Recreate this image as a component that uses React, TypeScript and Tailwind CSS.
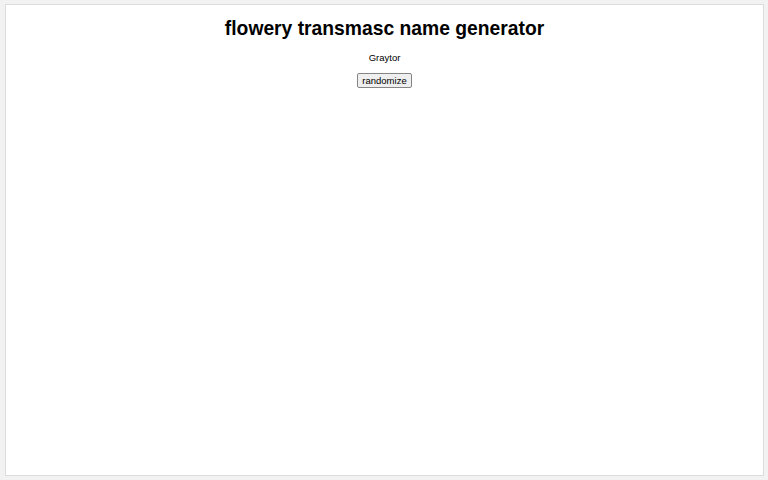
import { useState } from "react";

const NAMES = ["Graytor", "Rowan", "Fennel", "Basil", "Alder", "Sorrel"];

const App = () => {
  const [name, setName] = useState(NAMES[0]);

  const randomize = () => {
    setName(NAMES[Math.floor(Math.random() * NAMES.length)]);
  };

  return (
    <div className="h-[480px] w-[768px] bg-[#f2f2f2] pl-[5px] pr-[4px] pt-[4px] pb-[4px] font-['Liberation_Sans',Arial,sans-serif] text-black">
      <div className="flex h-full flex-col items-center border border-[#dcdcdc] bg-white">
        {/* Title */}
        <h1 className="mt-[12px] text-[19.3px] font-bold leading-[23px]">flowery transmasc name generator</h1>

        {/* Generated name */}
        <p className="mt-[11px] text-[9.5px] leading-[13px]">{name}</p>

        {/* Button */}
        <button
          onClick={randomize}
          className="mt-[9px] rounded-[2px] border border-[#858585] bg-[#efefef] px-[4px] text-[9.5px] leading-[13px]"
        >
          randomize
        </button>
      </div>
    </div>
  );
};

export default App;
